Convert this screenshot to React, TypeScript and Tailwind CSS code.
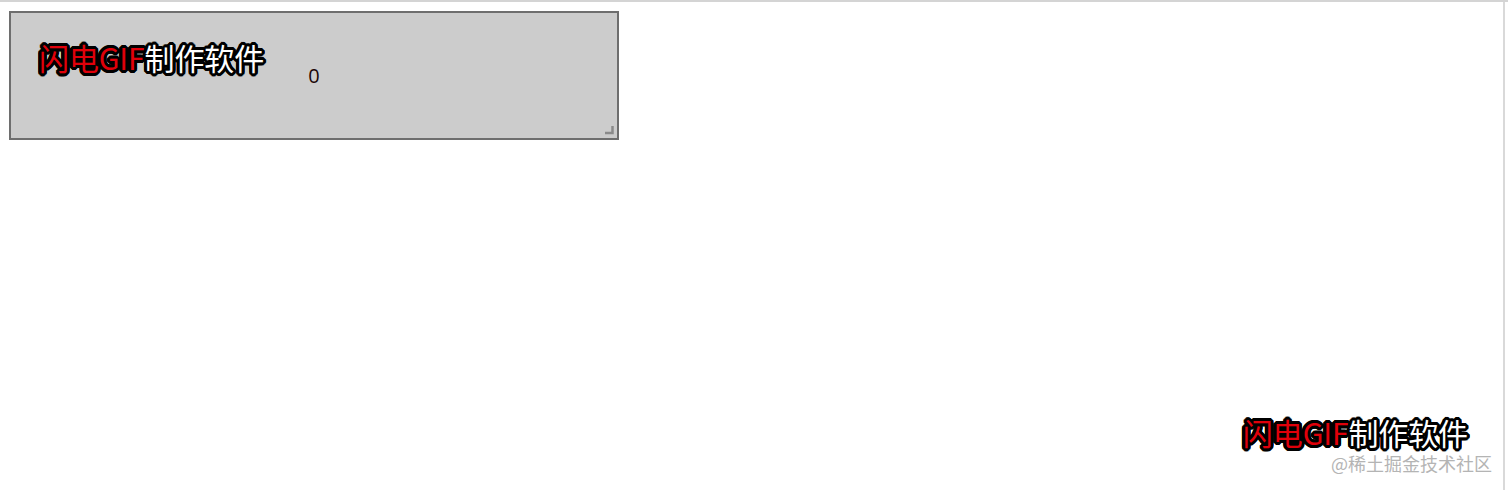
function GifLogo() {
  return (
    <div className="font-['Noto_Sans_CJK_SC',sans-serif] font-normal text-[30px] leading-[36px] tracking-[-0.1px] whitespace-nowrap text-white [text-shadow:3px_0_#000,-3px_0_#000,0_3px_#000,0_-3px_#000,2px_2px_#000,2px_-2px_#000,-2px_2px_#000,-2px_-2px_#000,3px_1px_#000,3px_-1px_#000,-3px_1px_#000,-3px_-1px_#000,1px_3px_#000,1px_-3px_#000,-1px_3px_#000,-1px_-3px_#000]">
      <span className="text-[#e0000a]">闪电GIF</span>制作软件
    </div>
  );
}

function CounterBox() {
  return (
    <div className="relative flex w-[610px] h-[129px] ml-[9px] mt-[10px] border-2 border-[#6e6e6e] bg-[#cccccc] pl-[28px] pt-[26px]">
      <GifLogo />
      <span className="ml-[44px] mt-[24px] h-[26px] font-['Open_Sans',sans-serif] text-[20px] leading-[26px] text-[#1a0505]">0</span>
      {/* resize handle */}
      <svg className="absolute right-[2px] bottom-[2px]" width="11" height="11" viewBox="0 0 11 11">
        <path d="M1 8H8.5V1" fill="none" stroke="#8a8a8a" strokeWidth="2.5" />
      </svg>
    </div>
  );
}

export default function App() {
  return (
    <div className="flex flex-col h-[490px] w-[1508px] overflow-hidden bg-white border-t-2 border-[#d4d4d4]">
      <div className="flex flex-col flex-1 w-[1505px] border-r-2 border-[#d9d9d9]">
        <div className="-mt-px">
          <CounterBox />
        </div>
        <div className="mt-auto mb-[16px] mr-[11px] self-end flex flex-col items-end">
          <div className="mr-[24px]">
            <GifLogo />
          </div>
          <div className="mt-[2px] font-['Noto_Sans_CJK_SC',sans-serif] text-[18px] leading-[22px] text-[#b4b4b4]">
            @稀土掘金技术社区
          </div>
        </div>
      </div>
    </div>
  );
}
